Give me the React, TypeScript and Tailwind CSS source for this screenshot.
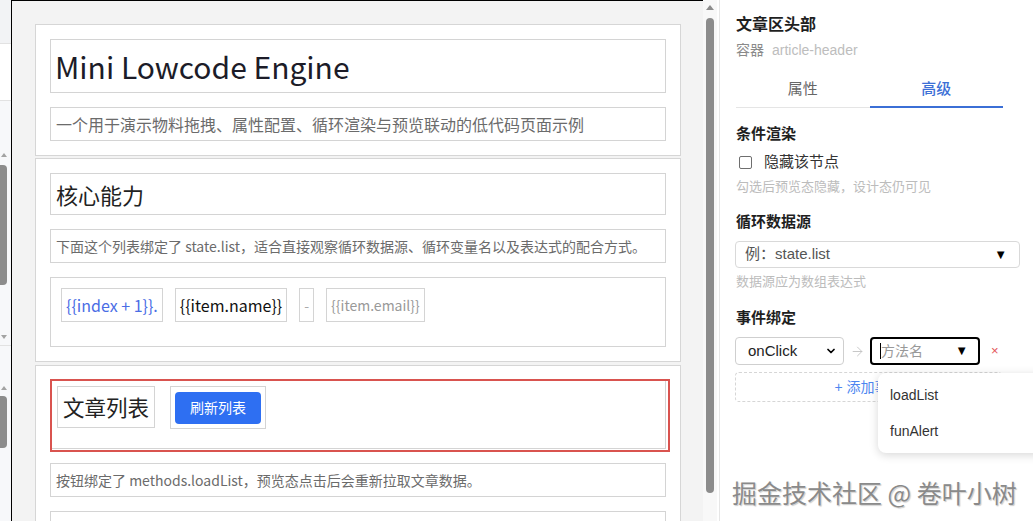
import { ArrowRight, ChevronDown } from "lucide-react"

const Box = ({ className = "", children }: { className?: string, children?: React.ReactNode }) => (
    <div className={"border border-[#d4d4d4] flex items-center " + className}>{children}</div>
)

const LeftStrip = () => (
    <div className="w-[11px] h-full flex flex-col bg-[#f7f8fa]">
        <div className="h-[44px] border-b border-[#e2e2e2] bg-[#f2f3f5]" />
        <div className="h-[57px] border-b border-[#e2e2e2] bg-white" />
        <div className="h-[245px] border-b border-[#e2e2e2] bg-[#f7f8fa] flex flex-col">
            <div className="mt-[52px] ml-[1px] w-0 h-0 border-x-[3px] border-x-transparent border-b-[4px] border-b-[#a3a3a3]" />
            <div className="mt-[8px] w-[7px] h-[120px] rounded-r-[4px] bg-[#8c8c8c]" />
            <div className="mt-[50px] ml-[1px] w-0 h-0 border-x-[3px] border-x-transparent border-t-[4px] border-t-[#a3a3a3]" />
        </div>
        <div className="flex-1 bg-[#f7f8fa] flex flex-col">
            <div className="mt-[40px] ml-[1px] w-0 h-0 border-x-[3px] border-x-transparent border-b-[4px] border-b-[#a3a3a3]" />
            <div className="mt-[6px] w-[7px] h-[52px] rounded-r-[4px] bg-[#8c8c8c]" />
        </div>
    </div>
)

const Canvas = () => (
    <div className="w-[692px] h-full border-l border-t border-black bg-[#f3f3f3] overflow-hidden pt-[23px] pl-[23px] font-['Noto_Sans_CJK_SC',sans-serif]">
        {/* 页面头部 */}
        <div className="w-[646px] border border-[#d6d6d6] bg-white p-[14px] flex flex-col gap-[14px]">
            <Box className="h-[54px] pl-[4px] text-[30px] text-[#1c1c28]">Mini Lowcode Engine</Box>
            <Box className="h-[34px] pl-[5px] text-[16px] text-[#6b6b6b]">一个用于演示物料拖拽、属性配置、循环渲染与预览联动的低代码页面示例</Box>
        </div>
        {/* 核心能力 */}
        <div className="mt-[2px] w-[646px] border border-[#d6d6d6] bg-white p-[14px] flex flex-col gap-[14px]">
            <Box className="h-[42px] pl-[5px] text-[22px] text-[#222]">核心能力</Box>
            <Box className="h-[34px] pl-[5px] text-[14px] text-[#6b6b6b]">下面这个列表绑定了 state.list，适合直接观察循环数据源、循环变量名以及表达式的配合方式。</Box>
            <div className="h-[70px] border border-[#d4d4d4] pt-[10px] pl-[10px] flex items-start gap-[12px]">
                <Box className="h-[34px] px-[4px] text-[16px] text-[#4a6de5]">{"{{index + 1}}."}</Box>
                <Box className="h-[34px] px-[4px] text-[16px] text-[#111]">{"{{item.name}}"}</Box>
                <Box className="h-[34px] px-[4px] text-[14px] text-[#aaa]">-</Box>
                <Box className="h-[34px] px-[4px] text-[14px] text-[#999]">{"{{item.email}}"}</Box>
            </div>
        </div>
        {/* 文章列表 */}
        <div className="mt-[3px] w-[646px] border border-[#d6d6d6] bg-white p-[14px] flex flex-col gap-[14px]">
            <div className="relative h-[69px] border border-[#d4d4d4] pt-[5px] pl-[6px] flex items-start gap-[15px]">
                <Box className="h-[42px] px-[5px] text-[21.5px] text-[#222]">文章列表</Box>
                <Box className="h-[43px] p-[4px]">
                    <button className="h-[32px] w-[86px] rounded-[4px] bg-[#2e6ff2] text-white text-[14px]">刷新列表</button>
                </Box>
                <div className="absolute -left-[1px] -top-[2px] -right-[5px] -bottom-[4px] border-2 border-[#d9534f]" />
            </div>
            <Box className="h-[34px] pl-[5px] text-[14px] text-[#6b6b6b]">按钮绑定了 methods.loadList，预览态点击后会重新拉取文章数据。</Box>
            <Box className="h-[60px]" />
        </div>
    </div>
)

const ScrollBar = () => (
    <div className="w-[14px] h-full bg-[#f8f8f8] flex flex-col items-center">
        <div className="mt-[5px] w-0 h-0 border-x-[4px] border-x-transparent border-b-[5px] border-b-[#8c8c8c]" />
        <div className="mt-[8px] w-[8px] h-[475px] rounded-full bg-[#8c8c8c]" />
    </div>
)

const Panel = () => (
    <div className="relative w-[314px] h-full border-l border-[#e6e6e6] bg-white pl-[15px] font-['Liberation_Sans','Noto_Sans_CJK_SC',sans-serif]">
        <div className="pt-[13px] pl-[1px] text-[16px] leading-[24px] font-bold text-[#1f1f1f]">文章区头部</div>
        <div className="mt-[3px] pl-[1px] text-[14px] leading-[20px]">
            <span className="text-[#8a8a8a]">容器</span>
            <span className="ml-[8px] text-[#bdbdbd]">article-header</span>
        </div>
        <div className="mt-[12px] ml-[1px] w-[267px] flex text-[15px]">
            <div className="flex-1 h-[36px] flex items-center justify-center border-b border-[#e5e5e5] text-[#666]">属性</div>
            <div className="flex-1 h-[36px] flex items-center justify-center border-b-2 border-[#3b6fd6] text-[#3b6fd6] font-medium">高级</div>
        </div>

        <div className="mt-[15px] pl-[1px] text-[15px] leading-[22px] font-bold text-[#1f1f1f]">条件渲染</div>
        <div className="mt-[6px] h-[22px] flex items-center">
            <div className="ml-[4px] w-[13px] h-[13px] border border-[#6e6e6e] rounded-[2px]" />
            <span className="ml-[12px] text-[15px] text-[#333]">隐藏该节点</span>
        </div>
        <div className="mt-[5px] pl-[1px] text-[13px] leading-[18px] text-[#bcbcbc]">勾选后预览态隐藏，设计态仍可见</div>

        <div className="mt-[15px] pl-[1px] text-[15px] leading-[22px] font-bold text-[#1f1f1f]">循环数据源</div>
        <div className="mt-[8px] h-[27px] w-[285px] border border-[#d9d9d9] rounded-[4px] flex items-center pl-[9px] pr-[12px] text-[15px]">
            <span className="text-[#555]">例：state.list</span>
            <span className="ml-auto text-[13px] text-black">▼</span>
        </div>
        <div className="mt-[5px] pl-[1px] text-[13px] leading-[18px] text-[#bcbcbc]">数据源应为数组表达式</div>

        <div className="mt-[16px] pl-[1px] text-[15px] leading-[22px] font-bold text-[#1f1f1f]">事件绑定</div>
        <div className="relative mt-[8px] h-[28px] flex items-center">
            <div className="h-[28px] w-[109px] border border-[#cfcfcf] rounded-[4px] flex items-center pl-[12px] pr-[6px] text-[15px] text-[#222]">
                onClick
                <ChevronDown size={12} strokeWidth={3.5} className="ml-auto text-black" />
            </div>
            <div className="w-[26px] flex justify-center">
                <ArrowRight size={15} strokeWidth={1.5} className="text-[#c4c4c4]" />
            </div>
            <div className="h-[28px] w-[110px] border-2 border-black rounded-[4px] flex items-center pl-[8px] pr-[10px] text-[14px]">
                <span className="w-px h-[16px] bg-black" />
                <span className="text-[#999]">方法名</span>
                <span className="ml-auto text-[13px] text-black">▼</span>
            </div>
            <span className="ml-[11px] text-[13px] text-[#e35656]">×</span>
            <div className="absolute z-10 left-[143px] top-[36px] w-[170px] h-[80px] bg-white rounded-[8px] shadow-[0_2px_10px_rgba(0,0,0,0.16)] pt-[4px] text-[14px] text-[#333]">
                <div className="h-[36px] flex items-center pl-[12px]">loadList</div>
                <div className="h-[36px] flex items-center pl-[12px]">funAlert</div>
            </div>
        </div>
        <div className="mt-[7px] h-[30px] w-[267px] border border-dashed border-[#d6d6d6] rounded-[4px] flex items-center justify-center text-[14px] text-[#4d86f0]">
            + 添加事件
        </div>

        <div className="absolute left-[12px] top-[474px] text-[25px] text-[#8a8a8a] font-['Noto_Sans_CJK_SC',sans-serif] [text-shadow:0_0_2px_#fff,1px_1px_1px_rgba(0,0,0,0.25)]">
            掘金技术社区 @ 卷叶小树
        </div>
    </div>
)

const App = () => {
    return (
        <div className="w-[1033px] h-[521px] flex overflow-hidden bg-white">
            <LeftStrip />
            <Canvas />
            <ScrollBar />
            <div className="w-[2px] h-full bg-white" />
            <Panel />
        </div>
    )
}

export default App
